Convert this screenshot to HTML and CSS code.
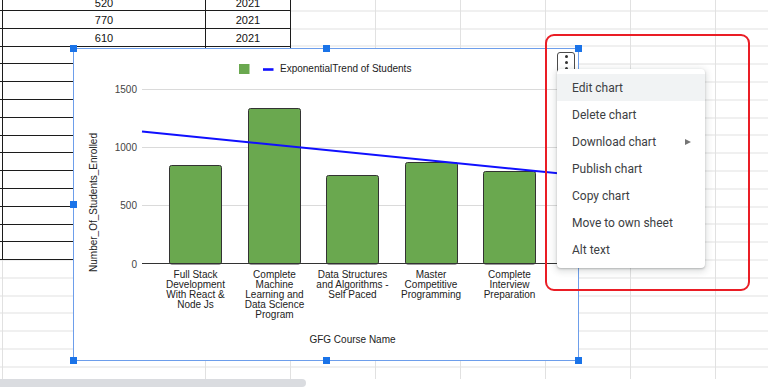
FILE: index.html
```html
<!DOCTYPE html>
<html lang="en">
<head>
<meta charset="utf-8">
<title>Chart menu</title>
<link rel="stylesheet" href="styles.css">
</head>
<body>
<div class="page">
  <div class="sheet">
    <div class="data">
      <div class="cell"></div><div class="cell">520</div><div class="cell">2021</div>
      <div class="cell"></div><div class="cell">770</div><div class="cell">2021</div>
      <div class="cell"></div><div class="cell">610</div><div class="cell">2021</div>
      <div class="cell"></div><div class="cell"></div><div class="cell"></div>
      <div class="cell"></div><div class="cell"></div><div class="cell"></div>
      <div class="cell"></div><div class="cell"></div><div class="cell"></div>
      <div class="cell"></div><div class="cell"></div><div class="cell"></div>
      <div class="cell"></div><div class="cell"></div><div class="cell"></div>
      <div class="cell"></div><div class="cell"></div><div class="cell"></div>
      <div class="cell"></div><div class="cell"></div><div class="cell"></div>
      <div class="cell"></div><div class="cell"></div><div class="cell"></div>
      <div class="cell"></div><div class="cell"></div><div class="cell"></div>
      <div class="cell"></div><div class="cell"></div><div class="cell"></div>
      <div class="cell"></div><div class="cell"></div><div class="cell"></div>
      <div class="cell"></div><div class="cell"></div><div class="cell"></div>
    </div>

    <div class="chart">
      <svg class="plot" width="504" height="311" viewBox="74 49 504 311" xmlns="http://www.w3.org/2000/svg">
        <rect x="239" y="64" width="10.5" height="10" fill="#6aa84f"/>
        <line x1="263" y1="69.5" x2="273.5" y2="69.5" stroke="#1010ff" stroke-width="2.6"/>
        <text class="legend" x="280" y="72">ExponentialTrend of Students</text>

        <line x1="142" y1="89.5" x2="570" y2="89.5" class="grid"/>
        <line x1="142" y1="147.5" x2="570" y2="147.5" class="grid"/>
        <line x1="142" y1="205.5" x2="570" y2="205.5" class="grid"/>

        <text class="ylab" x="137" y="92.5">1500</text>
        <text class="ylab" x="137" y="151">1000</text>
        <text class="ylab" x="137" y="209">500</text>
        <text class="ylab" x="137" y="267.5">0</text>

        <rect class="bar" x="169.5" y="165.5" width="52" height="98.5" rx="2"/>
        <rect class="bar" x="248.5" y="108.5" width="52" height="155.5" rx="2"/>
        <rect class="bar" x="326.5" y="175.5" width="52" height="88.5" rx="2"/>
        <rect class="bar" x="405.5" y="162.5" width="52" height="101.5" rx="2"/>
        <rect class="bar" x="483.5" y="171.5" width="52" height="92.5" rx="2"/>

        <line x1="142" y1="263.5" x2="570" y2="263.5" class="zero"/>

        <line x1="142" y1="131.5" x2="580" y2="175.5" stroke="#1010ff" stroke-width="2"/>

        <text class="cat" x="195.5" y="277.5">Full Stack<tspan x="195.5" dy="10">Development</tspan><tspan x="195.5" dy="10">With React &amp;</tspan><tspan x="195.5" dy="10">Node Js</tspan></text>
        <text class="cat" x="274.5" y="277.5">Complete<tspan x="274.5" dy="10">Machine</tspan><tspan x="274.5" dy="10">Learning and</tspan><tspan x="274.5" dy="10">Data Science</tspan><tspan x="274.5" dy="10">Program</tspan></text>
        <text class="cat" x="352.5" y="277.5">Data Structures<tspan x="352.5" dy="10">and Algorithms -</tspan><tspan x="352.5" dy="10">Self Paced</tspan></text>
        <text class="cat" x="431" y="277.5">Master<tspan x="431" dy="10">Competitive</tspan><tspan x="431" dy="10">Programming</tspan></text>
        <text class="cat" x="509.5" y="277.5">Complete<tspan x="509.5" dy="10">Interview</tspan><tspan x="509.5" dy="10">Preparation</tspan></text>

        <text class="cat" x="352.5" y="342.5">GFG Course Name</text>
        <text class="cat" transform="translate(97 202.5) rotate(-90)" x="0" y="0">Number_Of_Students_Enrolled</text>
      </svg>
      <span class="handle h-tl"></span>
      <span class="handle h-tc"></span>
      <span class="handle h-tr"></span>
      <span class="handle h-ml"></span>
      <span class="handle h-mr"></span>
      <span class="handle h-bl"></span>
      <span class="handle h-bc"></span>
      <span class="handle h-br"></span>
    </div>

    <div class="kebab"><span class="dot"></span><span class="dot"></span><span class="dot"></span></div>

    <div class="menu">
      <div class="item active">Edit chart</div>
      <div class="item">Delete chart</div>
      <div class="item">Download chart<span class="sub"></span></div>
      <div class="item">Publish chart</div>
      <div class="item">Copy chart</div>
      <div class="item">Move to own sheet</div>
      <div class="item">Alt text</div>
    </div>

    <div class="callout"></div>
  </div>
  <div class="hscroll"><div class="thumb"></div></div>
</div>
</body>
</html>
```

FILE: styles.css
```css
* { box-sizing: border-box; }

html, body {
  margin: 0;
  padding: 0;
  background: #fff;
}

.page {
  width: 768px;
  height: 387px;
  overflow: hidden;
  display: flex;
  flex-direction: column;
  font-family: "Liberation Sans", Arial, sans-serif;
}

.sheet {
  position: relative;
  flex: 1;
  overflow: hidden;
  background-color: #fff;
  background-image:
    linear-gradient(to right, transparent 2px, #e1e1e1 2px, #e1e1e1 3px, transparent 3px),
    repeating-linear-gradient(to right, transparent 0, transparent 84px, #e1e1e1 84px, #e1e1e1 85px),
    repeating-linear-gradient(to bottom, transparent 0, transparent 16.8px, #e1e1e1 16.8px, #e1e1e1 17.8px);
  background-position: 0 0, 121px 0, 0 -6.5px;
  background-size: 100% 100%, 647px 100%, 100% 100%;
  background-repeat: no-repeat, no-repeat, repeat;
}

/* bordered data range */
.data {
  display: grid;
  grid-template-columns: 3px 203px 85px;
  grid-auto-rows: 17.8px;
  width: 291px;
  margin-top: -6.8px;
}

.cell {
  border-right: 1px solid #1c1c1c;
  border-bottom: 1px solid #1c1c1c;
  display: flex;
  align-items: center;
  justify-content: center;
  padding-top: 2px;
  font-size: 11px;
  color: #111;
  background: #fff;
  white-space: nowrap;
}

/* chart object */
.chart {
  position: absolute;
  left: 73px;
  top: 48px;
  width: 506px;
  height: 313px;
  border: 1px solid #6d9eeb;
  background: #fff;
}

.plot {
  display: block;
  font-family: "Liberation Sans", Arial, sans-serif;
}

.plot .legend { font-size: 10px; fill: #222; }
.plot .ylab { font-size: 10px; fill: #444; text-anchor: end; }
.plot .cat { font-size: 10px; fill: #222; text-anchor: middle; }
.plot .grid { stroke: #dadada; stroke-width: 1.2; }
.plot .zero { stroke: #333; stroke-width: 1; }
.plot .bar { fill: #6aa84f; stroke: #333; stroke-width: 1; }

.handle {
  position: absolute;
  width: 7px;
  height: 7px;
  background: #1a73e8;
}
.h-tl { left: -4px; top: -4px; }
.h-tc { left: calc(50% - 3.5px); top: -4px; }
.h-tr { left: calc(100% - 3px); top: -4px; }
.h-ml { left: -4px; top: calc(50% - 3.5px); }
.h-mr { left: calc(100% - 3px); top: calc(50% - 3.5px); }
.h-bl { left: -4px; top: calc(100% - 3px); }
.h-bc { left: calc(50% - 3.5px); top: calc(100% - 3px); }
.h-br { left: calc(100% - 3px); top: calc(100% - 3px); }

.kebab {
  position: absolute;
  left: 557px;
  top: 52px;
  width: 18px;
  height: 22px;
  border: 1px solid #4a4a4a;
  border-radius: 3px;
  background: #fff;
  display: flex;
  flex-direction: column;
  align-items: center;
  gap: 3px;
  padding-top: 2px;
}
.kebab .dot {
  width: 3px;
  height: 3px;
  border-radius: 50%;
  background: #333;
}

/* context menu */
.menu {
  position: absolute;
  left: 557px;
  top: 69px;
  width: 148px;
  padding: 5px 0 5px;
  background: #fff;
  border-radius: 4px;
  box-shadow: 0 1px 2px rgba(60, 64, 67, 0.3), 0 2px 6px 2px rgba(60, 64, 67, 0.15);
  font-family: Roboto, "Liberation Sans", Arial, sans-serif;
  font-size: 12px;
  color: #3c4043;
}

.item {
  height: 27px;
  display: flex;
  align-items: center;
  padding: 0 14px 0 15px;
  white-space: nowrap;
}
.item.active { background: #f1f3f4; }

.sub {
  margin-left: auto;
  width: 0;
  height: 0;
  border-left: 6px solid #757575;
  border-top: 3px solid transparent;
  border-bottom: 3px solid transparent;
}

/* red annotation */
.callout {
  position: absolute;
  left: 545px;
  top: 34px;
  width: 205px;
  height: 257px;
  border: 2px solid #ea1d25;
  border-radius: 9px;
  pointer-events: none;
}

.hscroll {
  height: 8px;
  background: #fff;
  flex: none;
}
.hscroll .thumb {
  width: 306px;
  height: 8px;
  background: #dadce0;
  border-radius: 0 4px 4px 0;
}
```
